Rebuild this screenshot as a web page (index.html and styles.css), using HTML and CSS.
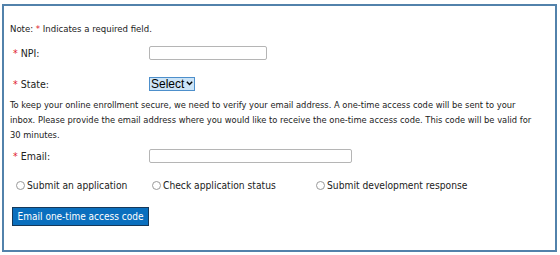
FILE: index.html
```html
<!DOCTYPE html>
<html>
<head>
    <title>Verify Email</title>
    <link rel="stylesheet" href="styles.css">
</head>
<body>
    <div class="enroll-box">
        <p class="note">Note: <span class="req">*</span> Indicates a required field.</p>
        <div class="form-row">
            <label class="field-label"><span class="req">*</span> NPI:</label>
            <input type="text" class="npi-input" id="npi">
        </div>
        <div class="form-row">
            <label class="field-label"><span class="req">*</span> State:</label>
            <span class="select-wrap">
                <select id="state">
                    <option>Select</option>
                </select>
                <svg class="chevron" width="7" height="5" viewBox="0 0 7 5"><path d="M0.8 0.8 L3.5 3.6 L6.2 0.8" fill="none" stroke="#000" stroke-width="1.4"/></svg>
            </span>
        </div>
        <p class="info">To keep your online enrollment secure, we need to verify your email address. A one-time access code will be sent to your<br>inbox. Please provide the email address where you would like to receive the one-time access code. This code will be valid for<br>30 minutes.</p>
        <div class="form-row">
            <label class="field-label"><span class="req">*</span> Email:</label>
            <input type="email" class="email-input" id="email">
        </div>
        <div class="radio-row">
            <label class="radio r1"><input type="radio" name="action">Submit an application</label>
            <label class="radio r2"><input type="radio" name="action">Check application status</label>
            <label class="radio r3"><input type="radio" name="action">Submit development response</label>
        </div>
        <button class="send-btn">Email one-time access code</button>
    </div>
</body>
</html>
```

FILE: styles.css
```css
body {
    margin: 0;
    font-family: "DejaVu Sans Condensed", "DejaVu Sans", sans-serif;
    color: #222;
}
.enroll-box {
    margin: 4px 0 0 2px;
    width: 551px;
    height: 244px;
    border: 2px solid #5282ab;
    padding: 0;
    box-sizing: content-box;
}
.note {
    font-size: 9.5px;
    margin: 16px 0 0 6px;
    line-height: 14px;
}
.req {
    color: #e0202a;
}
.form-row {
    display: flex;
    align-items: center;
    height: 15px;
    margin-left: 9px;
    font-size: 10.5px;
}
.form-row + .form-row {
    margin-top: 16px;
}
.note + .form-row {
    margin-top: 9px;
}
.field-label {
    width: 136px;
}
input[type=text], input[type=email] {
    height: 14px;
    padding: 0;
    border: 1px solid #b5b5b5;
    border-radius: 2px;
    box-sizing: border-box;
}
.npi-input {
    width: 118px;
}
.email-input {
    width: 203px;
}
.select-wrap {
    display: inline-flex;
    align-items: center;
    height: 14px;
    width: 46px;
    box-sizing: border-box;
    border: 1px solid #4d8fcb;
    background: #cce4f7;
}
.select-wrap select {
    appearance: none;
    border: none;
    background: transparent;
    font-family: "Liberation Sans", sans-serif;
    font-size: 12px;
    padding: 0 0 0 1px;
    height: 12px;
    line-height: 12px;
    color: #000;
    width: 35px;
}
.chevron {
    margin-left: 1px;
}
.info {
    font-size: 9.25px;
    line-height: 15px;
    width: 545px;
    white-space: nowrap;
    margin: 6px 0 0 6px;
}
.info + .form-row {
    margin-top: 6px;
}
.radio-row {
    display: flex;
    font-size: 10.2px;
    margin: 15px 0 0 12px;
    height: 15px;
    align-items: center;
}
.radio {
    display: flex;
    align-items: center;
}
.r1 { width: 136px; }
.r2 { width: 164px; }
.radio input {
    appearance: none;
    width: 9px;
    height: 9px;
    margin: 0 2px 0 0;
    border: 1px solid #9a9a9a;
    border-radius: 50%;
}
.send-btn {
    display: block;
    margin: 14px 0 0 8px;
    width: 137px;
    height: 19px;
    padding: 0;
    background: #0a6fbe;
    border: 1px solid #15385a;
    color: white;
    font-family: "DejaVu Sans Condensed", "DejaVu Sans", sans-serif;
    font-size: 10px;
    white-space: nowrap;
}
```
